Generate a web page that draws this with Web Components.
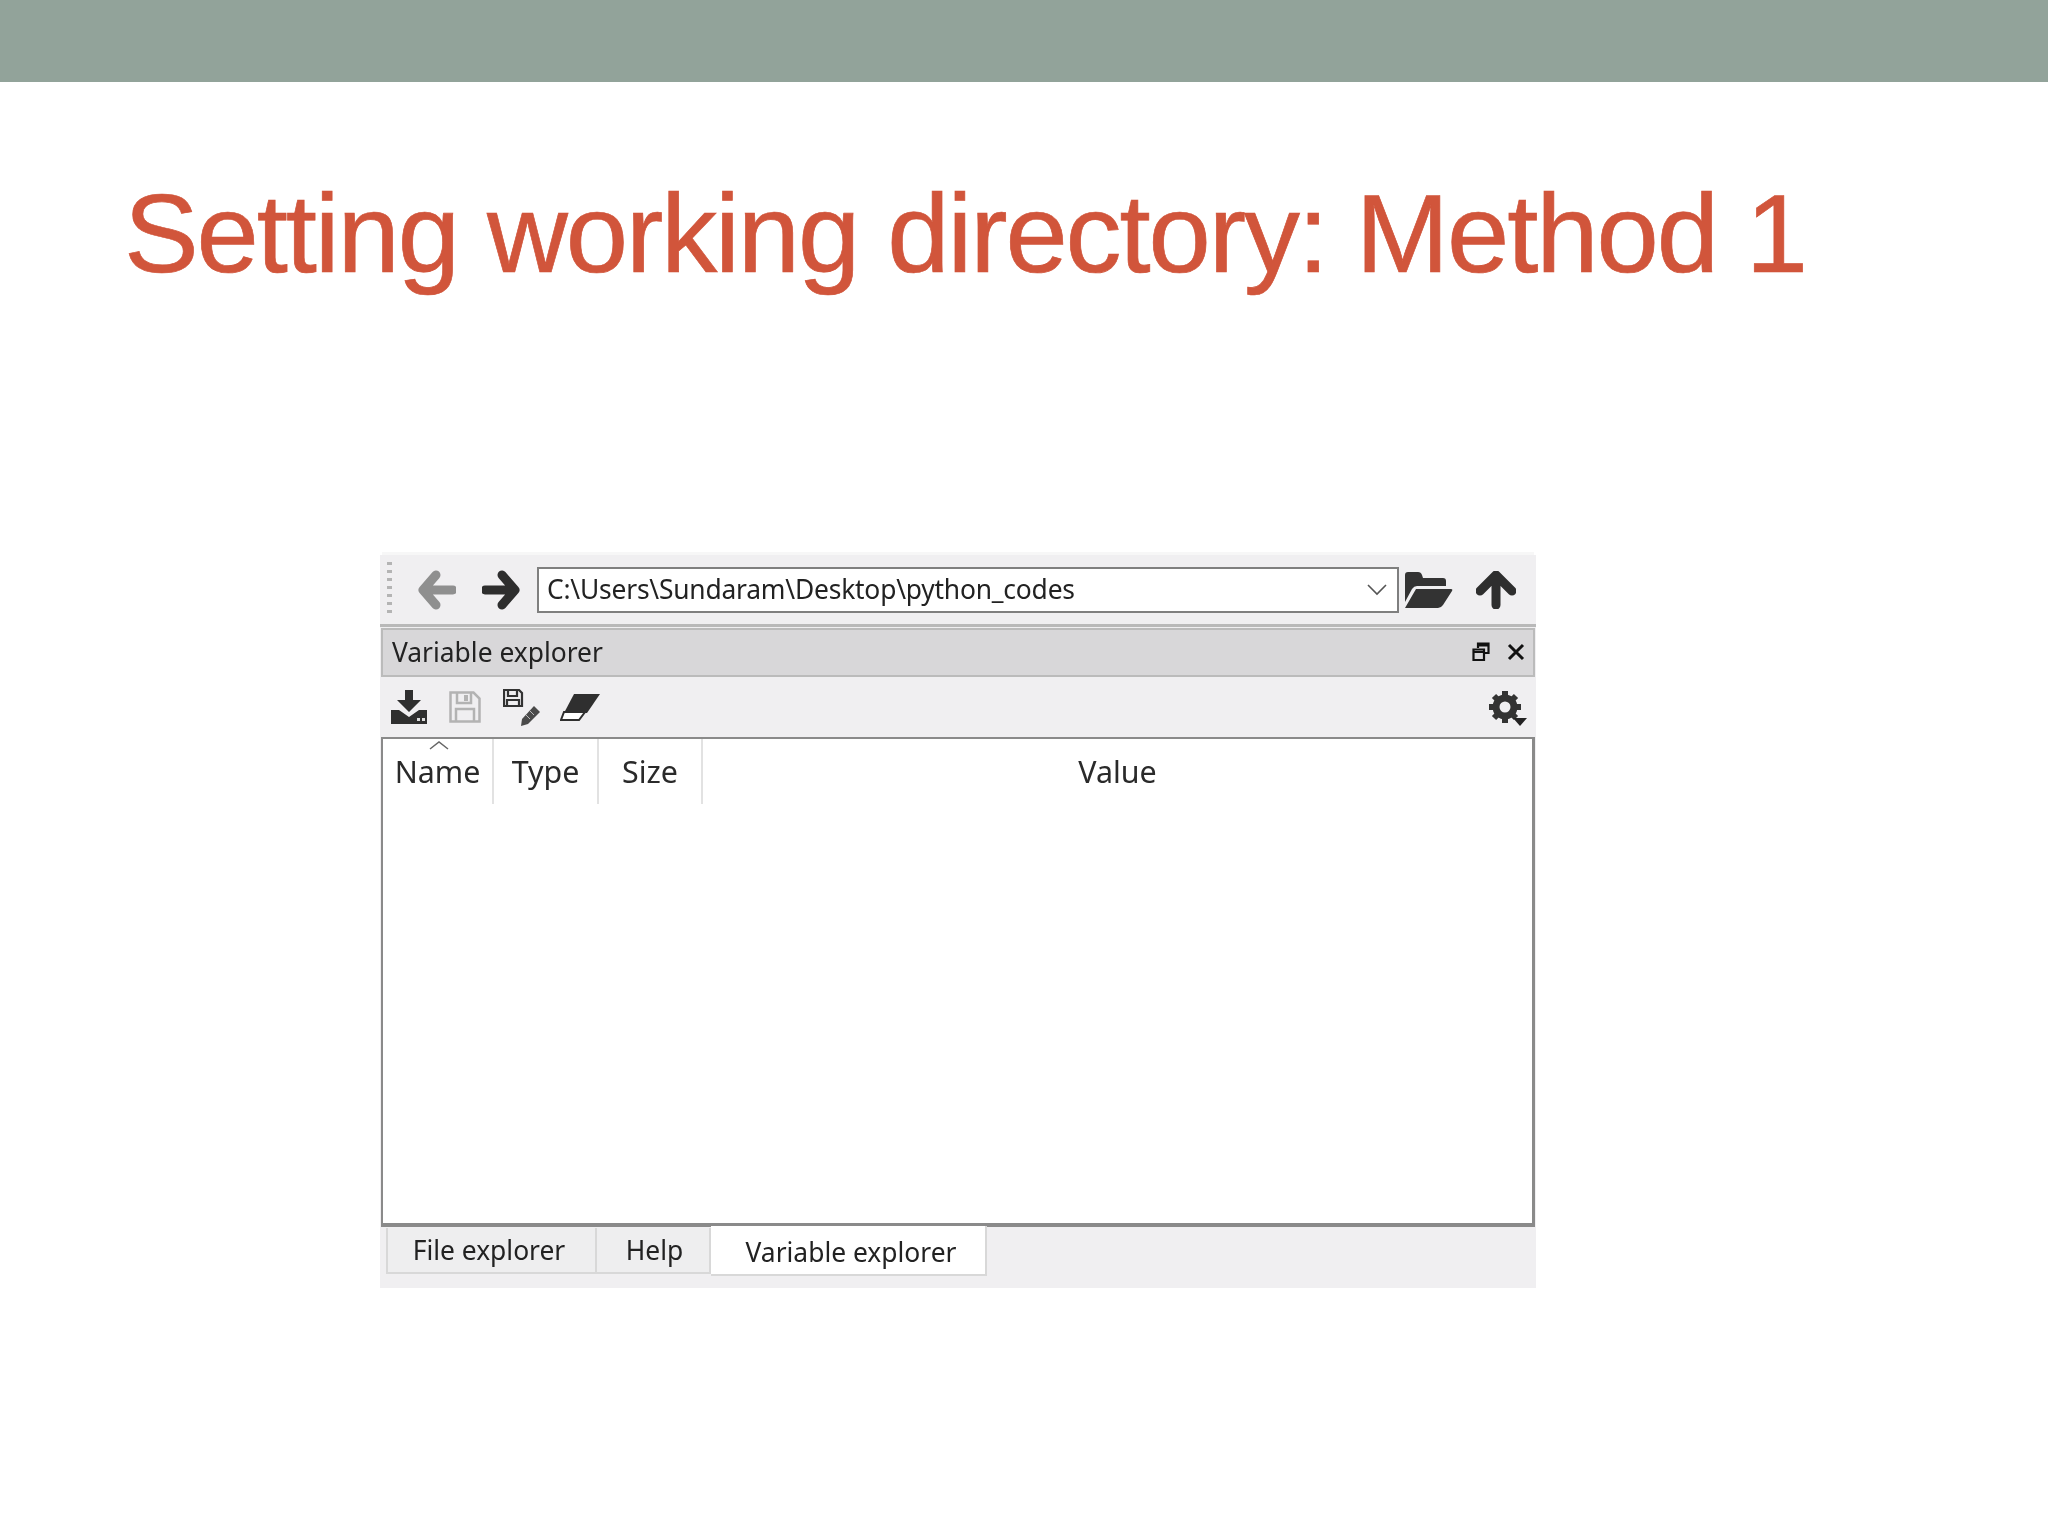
<!DOCTYPE html>
<html>
<head>
<meta charset="utf-8">
<title>Setting working directory</title>
<style>
	html, body { margin: 0; background: #fff; }
	body { width: 2048px; height: 1536px; overflow: hidden; }
</style>
</head>
<body>
<slide-page heading="Setting working directory: Method 1">
	<explorer-panel path="C:\Users\Sundaram\Desktop\python_codes" title="Variable explorer"></explorer-panel>
</slide-page>

<script>
const UI_FONT = `'Noto Sans', 'Open Sans', sans-serif`

class SlidePage extends HTMLElement {
	constructor() {
		super()
		this.attachShadow({ mode: 'open' })
		this.shadowRoot.innerHTML = `
			<style>
				:host { display: flex; flex-direction: column; width: 2048px; height: 1536px; background: #fff; }
				.band { height: 82px; background: #92a39a; flex: none; }
				h1 {
					margin: 0;
					padding: 92px 0 0 124px;
					height: 473px;
					box-sizing: border-box;
					font: 400 112px/120px 'Liberation Sans', Arial, sans-serif;
					letter-spacing: -2.1px;
					-webkit-text-stroke: 0.7px #d1553b;
					color: #d1553b;
					white-space: nowrap;
				}
				.body { padding-left: 380px; }
			</style>
			<div class="band"></div>
			<h1>${this.getAttribute('heading')}</h1>
			<div class="body"><slot></slot></div>
		`
	}
}

class PathBar extends HTMLElement {
	constructor() {
		super()
		this.attachShadow({ mode: 'open' })
		this.shadowRoot.innerHTML = `
			<style>
				:host { display: flex; align-items: center; height: 72px; box-sizing: border-box; padding: 4px 0 4px; background: #f0eff1; border-bottom: 3px solid #b9b9b9; box-shadow: 0 -5px 0 -2px #f7f7f7; }
				svg { display: block; flex: none; }
				.grip { margin: 0 0 0 7px; }
				.back { margin-left: 26px; }
				.fwd { margin-left: 26px; }
				.box {
					display: flex; align-items: center; justify-content: space-between;
					width: 862px; height: 46px; margin-left: 17px; box-sizing: border-box;
					padding: 0 10px 0 8px;
					background: #fff; border: 2px solid #7f7f7f;
					font: 400 26.4px/1 ${UI_FONT}; color: #222;
					letter-spacing: -0.2px;
				}
				.folder { margin-left: 6px; }
				.up { margin-left: 23px; }
			</style>
			<svg class="grip" width="5" height="56" viewBox="0 0 5 56" fill="#b4b4b4"><path d="M0 0h5v3H0zM0 8h5v3H0zM0 16h5v3H0zM0 24h5v3H0zM0 32h5v3H0zM0 40h5v3H0zM0 48h5v3H0z"/></svg>
			<svg class="back" width="38" height="40" viewBox="0 0 38 40"><path d="M18 5 5 20l13 15M6 20h29" fill="none" stroke="#8f8f8f" stroke-width="9" stroke-linecap="round" stroke-linejoin="round"/></svg>
			<svg class="fwd" width="38" height="40" viewBox="0 0 38 40"><path d="M20 5l13 15-13 15M32 20H3" fill="none" stroke="#2e2e2e" stroke-width="9" stroke-linecap="round" stroke-linejoin="round"/></svg>
			<div class="box"><span>${this.getAttribute('path')}</span>
				<svg width="20" height="12" viewBox="0 0 20 12"><path d="M1 1l9 9 9-9" fill="none" stroke="#555" stroke-width="1.6"/></svg>
			</div>
			<svg class="folder" width="48" height="38" viewBox="0 0 48 38"><path d="M0 4Q0 1 3 1h10q3 0 4 3l1 3h20q3 0 3 3v5H12q-3 0-5 3L0 31zM11 18h35q2 0 1 2l-9 14q-2 3-5 3H0z" fill="#333"/></svg>
			<svg class="up" width="40" height="38" viewBox="0 0 40 38"><path d="M4 20 20 4l16 16M20 6v28" fill="none" stroke="#2e2e2e" stroke-width="9" stroke-linecap="round" stroke-linejoin="round"/></svg>
		`
	}
}

class DockTitle extends HTMLElement {
	constructor() {
		super()
		this.attachShadow({ mode: 'open' })
		this.shadowRoot.innerHTML = `
			<style>
				:host { display: flex; align-items: center; height: 49px; box-sizing: border-box; margin: 1px 1px 0 1px; padding: 0 8px 0 9px; background: #d8d7d9; border: 2px solid #bbb; font: 400 26.4px/1 ${UI_FONT}; color: #222; }
				span { flex: 1; }
				svg { display: block; margin: 0 0 2px 17px; }
			</style>
			<span><slot></slot></span>
			<svg width="18" height="20" viewBox="0 0 18 20" fill="none" stroke="#111" stroke-width="2.2"><path d="M6 6V1.500h10.500V11H12M1.500 7.500H12V18H1.500zM6 3.500h10.500M1.500 10H12"/></svg>
			<svg width="18" height="18" viewBox="0 0 18 18" fill="none" stroke="#111" stroke-width="3"><path d="M2 2l14 14M16 2 2 16"/></svg>
		`
	}
}

class IconRow extends HTMLElement {
	constructor() {
		super()
		this.attachShadow({ mode: 'open' })
		this.shadowRoot.innerHTML = `
			<style>
				:host { display: flex; align-items: center; height: 60px; padding: 0 8px 0 11px; background: #f0eff1; }
				svg { display: block; flex: none; }
				.save { margin-left: 22px; }
				.edit { margin-left: 22px; margin-top: 2px; }
				.erase { margin-left: 19px; }
				.gear { margin-left: auto; margin-top: 4px; }
			</style>
			<svg width="36" height="34" viewBox="0 0 36 34" fill="#2f2f2f"><path d="M14 0h8v10h8L18 22 6 10h8z"/><path d="M0 20h8l10 7 10-7h8v14H0z"/><path d="M26 28h3v3h-3zM31 28h3v3h-3z" fill="#ddd"/></svg>
			<svg class="save" width="32" height="32" viewBox="0 0 32 32" fill="none" stroke="#b3b3b3" stroke-width="2.500"><path d="M1.500 1.500h23l6 6v23h-29z"/><path d="M8 2v10h14V2M7 30V18h18v12" /><path d="M15 4h4v6h-4z" fill="#b3b3b3" stroke="none"/></svg>
			<svg class="edit" width="38" height="38" viewBox="0 0 38 38"><g fill="none" stroke="#333" stroke-width="2.200"><path d="M1 1h15l3 3v13H1z"/><path d="M5 1v6h9V1M4 16v-5h12v5"/></g><path d="M18 37l1-7 12-13 6 6-12 12z" fill="#4a4a4a"/><path d="M23 26l4 4M27 22l4 4" stroke="#bbb" stroke-width="1"/></svg>
			<svg class="erase" width="40" height="28" viewBox="0 0 40 28"><path d="M14 1h26L27 20H4z" fill="#2f2f2f"/><path d="M4 19h21l-6 8H1z" fill="#fff" stroke="#2f2f2f" stroke-width="2"/></svg>
			<svg class="gear" width="40" height="36" viewBox="0 0 40 36"><circle cx="17" cy="16" r="9" fill="none" stroke="#333" stroke-width="7"/><g stroke="#333" stroke-width="6"><path d="M17 0v6M17 26v6M1 16h6M27 16h6M6 5l4 4M24 23l4 4M28 5l-4 4M10 23l-4 4"/></g><path d="M25 27h14l-7 8z" fill="#222"/></svg>
		`
	}
}

class VariableTable extends HTMLElement {
	constructor() {
		super()
		this.attachShadow({ mode: 'open' })
		this.shadowRoot.innerHTML = `
			<style>
				:host { display: block; height: 490px; box-sizing: border-box; margin: 0 1px; background: #fff; border: solid #8a8a8a; border-width: 2px 3px 4px 2px; font: 400 30.4px/1 ${UI_FONT}; color: #2a2a2a; }
				.head { display: grid; grid-template-columns: 111px 105px 104px 1fr; height: 65px; }
				.head div { position: relative; display: flex; align-items: center; justify-content: center; border-right: 2px solid #e2e2e2; padding-top: 1px; }
				.head div:last-child { border-right: 0; }
				svg { position: absolute; left: 46px; top: 1px; }
			</style>
			<div class="head">
				<div>Name<svg width="20" height="10" viewBox="0 0 20 10"><path d="M1 9l9-7 9 7" fill="none" stroke="#666" stroke-width="1.500"/></svg></div>
				<div>Type</div>
				<div>Size</div>
				<div>Value</div>
			</div>
		`
	}
}

class TabStrip extends HTMLElement {
	constructor() {
		super()
		this.attachShadow({ mode: 'open' })
		this.shadowRoot.innerHTML = `
			<style>
				:host { display: flex; align-items: flex-start; height: 61px; box-sizing: border-box; padding-left: 6px; background: #f0eff1; font: 400 26.4px/1 ${UI_FONT}; color: #222; }
				div { display: flex; align-items: center; justify-content: center; box-sizing: border-box; height: 46px; margin-top: 1px; background: #eeeeef; border: solid #d8d8d8; border-width: 0 2px 2px 0; }
				.a { width: 211px; border-left: 2px solid #d8d8d8; padding-right: 5px; }
				.b { width: 114px; padding-left: 3px; }
				.c { width: 276px; height: 50px; margin-top: -1px; background: #fff; padding: 4px 0 0 6px; }
			</style>
			<div class="a">File explorer</div>
			<div class="b">Help</div>
			<div class="c">Variable explorer</div>
		`
	}
}

class ExplorerPanel extends HTMLElement {
	constructor() {
		super()
		this.attachShadow({ mode: 'open' })
		const path = this.getAttribute('path')
		const title = this.getAttribute('title')
		this.shadowRoot.innerHTML = `
			<style>
				:host { display: block; width: 1156px; background: #f0eff1; filter: blur(0.45px); }
			</style>
			<path-bar path="${path}"></path-bar>
			<dock-title>${title}</dock-title>
			<icon-row></icon-row>
			<variable-table></variable-table>
			<tab-strip></tab-strip>
		`
	}
}

customElements.define('slide-page', SlidePage)
customElements.define('path-bar', PathBar)
customElements.define('dock-title', DockTitle)
customElements.define('icon-row', IconRow)
customElements.define('variable-table', VariableTable)
customElements.define('tab-strip', TabStrip)
customElements.define('explorer-panel', ExplorerPanel)
</script>
</body>
</html>
